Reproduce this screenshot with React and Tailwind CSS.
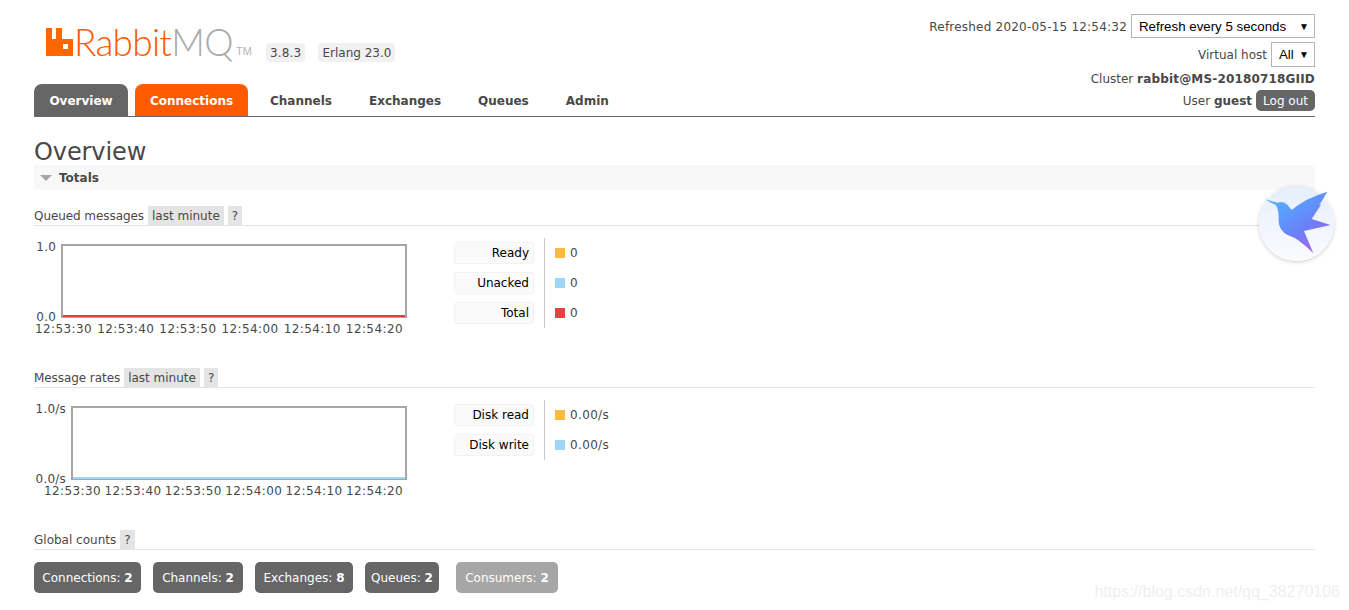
const verdana = "[font-family:Verdana,'DejaVu_Sans',sans-serif]";

function Section({ title, range, children, className, titleClass = "" }) {
  return (
    <div className={className}>
      <div className="flex items-end border-b border-[#e4e4e4] h-[20px] gap-1">
        <span className={`leading-[18px] ${titleClass}`}>{title}</span>
        {range && <span className="bg-[#e4e4e4] px-1 h-[19px] leading-[20px]">{range}</span>}
        <span className="bg-[#e4e4e4] px-[4px] h-[19px] leading-[20px]">?</span>
      </div>
      {children}
    </div>
  );
}

function Chart({ top, bottom, labelW, line, timesPl }) {
  const times = ["12:53:30", "12:53:40", "12:53:50", "12:54:00", "12:54:10", "12:54:20"];
  return (
    <div className="w-[373px]">
      <div className="flex">
        <div className={`${labelW} flex flex-col justify-between items-end pr-[5px] h-[84px] -mt-[4px] -mb-[6px] tracking-[0.2px]`}>
          <span className="leading-[14px]">{top}</span>
          <span className="leading-[14px]">{bottom}</span>
        </div>
        <div className="flex-1 h-[74px] border-2 border-[#a6a6a6] bg-white flex items-end">
          <div className={`w-full h-[2px] -mb-px ${line}`} />
        </div>
      </div>
      <div className={`flex justify-between ${timesPl} pr-[4px] leading-[14px] mt-[4px] tracking-[0.4px]`}>
        {times.map((t) => <span key={t}>{t}</span>)}
      </div>
    </div>
  );
}

function Legend({ rows }) {
  return (
    <div className="flex ml-[47px] -mt-[6px]">
      <div className="w-[80px] flex flex-col gap-[8px] py-[4px]">
        {rows.map((r) => (
          <div key={r.label} className="h-[22px] leading-[21px] text-right pr-[4px] text-black bg-[#fafafa] border border-[#f2f2f2] rounded-[3px]">{r.label}</div>
        ))}
      </div>
      <div className="ml-[10px] w-px bg-[#c8c8c8]" />
      <div className="ml-[10px] flex flex-col gap-[8px] py-[4px]">
        {rows.map((r) => (
          <div key={r.label} className="h-[22px] flex items-center gap-[5px]">
            <span className={`w-[10px] h-[10px] ${r.color}`} />
            <span className="tracking-[0.35px]">{r.value}</span>
          </div>
        ))}
      </div>
    </div>
  );
}

function Count({ children, value, light, className }) {
  return (
    <span className={`h-[31px] rounded-[5px] text-white text-center leading-[32px] whitespace-nowrap ${light ? "bg-[#a6a6a6]" : "bg-[#666666]"} ${className}`}>
      {children}: <b>{value}</b>
    </span>
  );
}

export default function App() {
  return (
    <div className={`relative h-[610px] overflow-hidden bg-white px-[34px] text-[12px] text-[#484848] ${verdana}`}>
      <header className="flex justify-between h-[117px] border-b border-[#666666]">
        <div>
          <div className="flex items-start h-[84px]">
            <svg className="ml-[12px] mt-[28px]" width="27" height="28" viewBox="0 0 27 28">
              <path fill="#ff6600" fillRule="evenodd" d="M0 0H6V11H10V0H16V11H27V28H0ZM17 16V21H22V16Z" />
            </svg>
            <span className="ml-[1px] mt-[20px] w-[159px] whitespace-nowrap text-[37px] leading-[44px] font-light tracking-[-0.75px] text-[#ff5a00] [font-family:Lato,sans-serif]">
              Rabbit<span className="text-[#aaaaaa]">MQ</span>
            </span>
            <span className="ml-[3px] mt-[46px] text-[11px] leading-[11px] text-[#b5b5b5] [font-family:'Liberation_Sans',sans-serif]">TM</span>
            <span className="ml-[14px] mt-[43px] h-[19px] leading-[20px] px-[4px] rounded-[4px] bg-[#f1f1f1] tracking-[0.2px]">3.8.3</span>
            <span className="ml-[13px] mt-[43px] h-[19px] leading-[20px] px-[4px] rounded-[4px] bg-[#f1f1f1]">Erlang 23.0</span>
          </div>
          <nav className="flex items-stretch h-[32px] font-bold">
            <a className="w-[94px] text-center pt-px leading-[32px] text-white bg-[#666666] rounded-t-[8px]">Overview</a>
            <a className="ml-[7px] w-[113px] text-center pt-px leading-[32px] text-white bg-[#ff5a00] rounded-t-[8px]">Connections</a>
            <a className="ml-[22px] pt-px leading-[32px]">Channels</a>
            <a className="ml-[37px] pt-px leading-[32px]">Exchanges</a>
            <a className="ml-[37px] pt-px leading-[32px]">Queues</a>
            <a className="ml-[37px] pt-px leading-[32px]">Admin</a>
          </nav>
        </div>
        <div className="flex flex-col items-end pt-[14px]">
          <div className="flex items-center gap-[4px] h-[24px]">
            <span className="pt-[2px] tracking-[0.21px]">Refreshed 2020-05-15 12:54:32</span>
            <div className="w-[184px] h-[24px] border border-[#b5b5b5] bg-white flex items-center justify-between pl-[7px] pr-[5px] text-[13.3px] text-black [font-family:'Liberation_Sans',sans-serif]">
              <span className="pt-px">Refresh every 5 seconds</span><span className="text-[10px]">▼</span>
            </div>
          </div>
          <div className="flex items-center gap-[4px] h-[25px] mt-[4px]">
            <span>Virtual host</span>
            <div className="w-[44px] h-[25px] border border-[#b5b5b5] bg-white flex items-center justify-between pl-[7px] pr-[5px] text-[13.3px] text-black [font-family:'Liberation_Sans',sans-serif]">
              <span>All</span><span className="text-[10px]">▼</span>
            </div>
          </div>
          <div className="h-[14px] leading-[14px] mt-[5px]">Cluster <b className="tracking-[0.17px]">rabbit@MS-20180718GIID</b></div>
          <div className="flex items-center gap-[4px] mt-[4px]">
            <span>User <b>guest</b></span>
            <span className="h-[21px] leading-[22px] px-[7px] rounded-[5px] bg-[#666666] text-white">Log out</span>
          </div>
        </div>
      </header>

      <h1 className="text-[24px] leading-[28px] font-normal mt-[21px] tracking-[-0.1px]">Overview</h1>
      <div className="h-[25px] -mt-[1px] bg-[#f8f8f8] flex items-center pl-[6px] gap-[7px] font-bold">
        <span className="w-0 h-0 border-x-[6px] border-x-transparent border-t-[6px] border-t-[#a6a6a6]" />
        <span>Totals</span>
      </div>

      <Section title="Queued messages" titleClass="tracking-[-0.07px]" range="last minute" className="mt-[16px]">
        <div className="flex items-start mt-[18px]">
          <Chart top="1.0" bottom="0.0" labelW="w-[27px]" line="bg-[#e04040]" timesPl="pl-[1px]" />
          <Legend rows={[
            { label: "Ready", color: "bg-[#f8bb3d]", value: "0" },
            { label: "Unacked", color: "bg-[#9fd6f8]", value: "0" },
            { label: "Total", color: "bg-[#e04444]", value: "0" },
          ]} />
        </div>
      </Section>

      <Section title="Message rates" titleClass="tracking-[-0.07px]" range="last minute" className="mt-[32px]">
        <div className="flex items-start mt-[18px]">
          <Chart top="1.0/s" bottom="0.0/s" labelW="w-[37px]" line="bg-[#9fd6f8]" timesPl="pl-[10px]" />
          <Legend rows={[
            { label: "Disk read", color: "bg-[#f8bb3d]", value: "0.00/s" },
            { label: "Disk write", color: "bg-[#9fd6f8]", value: "0.00/s" },
          ]} />
        </div>
      </Section>

      <Section title="Global counts" className="mt-[32px]">
        <div className="flex mt-[12px]">
          <Count value="2" className="w-[107px]">Connections</Count>
          <Count value="2" className="w-[90px] ml-[12px]">Channels</Count>
          <Count value="8" className="w-[98px] ml-[12px]">Exchanges</Count>
          <Count value="2" className="w-[74px] ml-[12px]">Queues</Count>
          <Count value="2" light className="w-[102px] ml-[17px]">Consumers</Count>
        </div>
      </Section>

      <div className="absolute left-[1259px] top-[186px] w-[75px] h-[75px] rounded-full bg-gradient-to-b from-[#e6eefc] to-[#fbfbff] shadow-[0_1px_4px_rgba(0,0,0,0.2)]" />
      <svg className="absolute left-[1240px] top-[170px]" width="109" height="100" viewBox="0 0 327 300">
        <defs>
          <linearGradient id="bird" x1="0.2" y1="0.2" x2="0.8" y2="1">
            <stop offset="0" stopColor="#55a8ff" />
            <stop offset="0.55" stopColor="#6a80f8" />
            <stop offset="1" stopColor="#b85cf0" />
          </linearGradient>
        </defs>
        <path fill="url(#bird)" d="M75 88L112 98Q130 92 142 104L155 120Q195 85 262 65Q250 85 238 106L244 103L215 147L272 165L192 183L220 250Q175 205 145 196Q115 182 116 150Q117 122 108 106Z" />
      </svg>
      <div className="absolute right-[9px] top-[583px] text-[16px] leading-[18px] text-[#efefef] [font-family:'Liberation_Sans',sans-serif]">https://blog.csdn.net/qq_38270106</div>
    </div>
  );
}
